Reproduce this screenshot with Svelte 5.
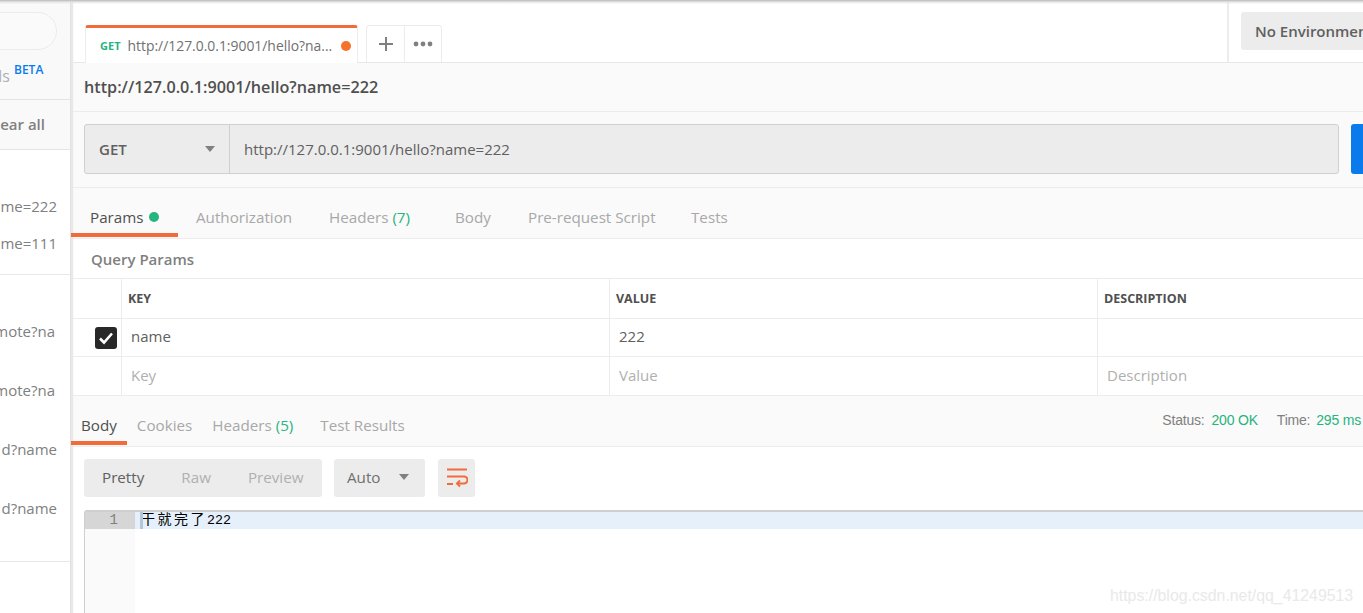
<script>
  const historyGroups = [
    { height: 125, items: [
      { text: 'http://127.0.0.1:9001/hello?name=222', h: 37 },
      { text: 'http://127.0.0.1:9001/hello?name=111', h: 37 }
    ] },
    { height: 287, items: [
      { text: 'http://127.0.0.1:9001/remote?na', h: 59, short: true },
      { text: 'http://127.0.0.1:9001/remote?na', h: 59, short: true },
      { text: 'd?name', h: 59 },
      { text: 'd?name', h: 59 }
    ] }
  ];
  const url = 'http://127.0.0.1:9001/hello?name=222';
</script>

<div class="shell">
  <aside class="sidebar">
    <div class="search-wrap"><div class="search"></div></div>
    <div class="side-tabs"><span class="faded">APIs</span><sup class="beta">BETA</sup></div>
    <div class="clear"><span>Clear all</span></div>
    {#each historyGroups as group}
      <div class="group" style="height: {group.height}px">
        {#each group.items as item}
          <div class="history" class:short={item.short} style="height: {item.h}px"><span>{item.text}</span></div>
        {/each}
      </div>
    {/each}
  </aside>

  <main class="main">
    <div class="tabbar">
      <div class="tabs">
        <div class="tab">
          <span class="tab-method">GET</span>
          <span class="tab-url">http://127.0.0.1:9001/hello?na...</span>
          <span class="dot"></span>
        </div>
        <div class="tab-actions">
          <div class="add">
            <svg width="16" height="16" viewBox="0 0 16 16"><path d="M8 1v14M1 8h14" stroke="#808080" stroke-width="2" fill="none"/></svg>
          </div>
          <div class="more">
            <svg width="20" height="6" viewBox="0 0 20 6" fill="#808080"><circle cx="3" cy="3" r="2.4"/><circle cx="10" cy="3" r="2.4"/><circle cx="17" cy="3" r="2.4"/></svg>
          </div>
        </div>
      </div>
      <div class="env"><div class="env-select">No Environment</div></div>
    </div>

    <div class="title">{url}</div>

    <div class="urlrow">
      <div class="urlbox">
        <div class="method">
          <span>GET</span>
          <i class="caret"></i>
        </div>
        <div class="urlinput">{url}</div>
      </div>
      <div class="send"></div>
    </div>

    <div class="reqtabs">
      <div class="reqtab active params">Params <span class="green-dot"></span></div>
      <div class="reqtab auth">Authorization</div>
      <div class="reqtab hdrs">Headers <em>(7)</em></div>
      <div class="reqtab body">Body</div>
      <div class="reqtab pre">Pre-request Script</div>
      <div class="reqtab">Tests</div>
    </div>

    <div class="query-title">Query Params</div>

    <div class="grid head">
      <div class="c0"></div>
      <div class="c">KEY</div>
      <div class="c">VALUE</div>
      <div class="c">DESCRIPTION</div>
    </div>
    <div class="grid row filled">
      <div class="c0">
        <span class="check">
          <svg width="16" height="14" viewBox="0 0 16 14"><path d="M2 7.5l4 4 8-9" stroke="#fff" stroke-width="2.6" fill="none"/></svg>
        </span>
      </div>
      <div class="c val">name</div>
      <div class="c val">222</div>
      <div class="c val"></div>
    </div>
    <div class="grid row last">
      <div class="c0"></div>
      <div class="c val ph">Key</div>
      <div class="c val ph">Value</div>
      <div class="c val ph">Description</div>
    </div>

    <div class="restabs">
      <div class="restab active">Body</div>
      <div class="restab">Cookies</div>
      <div class="restab">Headers <em>(5)</em></div>
      <div class="restab">Test Results</div>
      <div class="status">
        <span>Status:</span><b>200 OK</b>
        <span class="time">Time:</span><b class="ms">295 ms</b>
      </div>
    </div>

    <div class="toolbar">
      <div class="modes">
        <span class="on">Pretty</span>
        <span>Raw</span>
        <span>Preview</span>
      </div>
      <div class="auto"><span>Auto</span><i class="caret"></i></div>
      <div class="wrap">
        <svg width="22" height="20" viewBox="0 0 22 20" fill="none" stroke="#f26b3a" stroke-width="2">
          <path d="M1 1.500H21"/>
          <path d="M1 8.500H18a3.500 3.500 0 0 1 0 7H11"/>
          <path d="M1 16H7"/>
          <path d="M14 12.500l-3 3 3 3"/>
        </svg>
      </div>
    </div>

    <div class="code">
      <div class="line">
        <div class="lineno">1</div>
        <div class="linetext"><i class="cursor"></i><span class="cjk">干就完了</span>222</div>
      </div>
      <div class="rest"><div class="gutter"></div></div>
    </div>
  </main>

  <div class="watermark">https://blog.csdn.net/qq_41249513</div>
</div>

<style>
  :global(body) {
    margin: 0;
    overflow: hidden;
    background: #fff;
  }

  .shell {
    position: relative;
    display: flex;
    width: 1363px;
    height: 613px;
    overflow: hidden;
    font-family: "Open Sans", "Noto Sans", sans-serif;
    font-size: 14px;
    color: #505050;
  }
  /* shadow strip along the top of the window */
  .shell::before {
    content: "";
    position: absolute;
    left: 0;
    right: 0;
    top: 0;
    height: 4px;
    background: linear-gradient(#b8b8b8, #e2e2e2 45%, transparent);
    z-index: 2;
  }

  /* sidebar */
  .sidebar {
    width: 71px;
    flex: none;
    overflow: hidden;
    box-sizing: border-box;
    border-right: 1px solid #e2e2e2;
    box-shadow: 2px 0 1px #e8e8e8;
    z-index: 1;
    background: #fff;
    color: #808080;
  }
  .search-wrap {
    height: 62px;
    background: #f9f9f9;
    padding: 12px 13px 0 0;
    box-sizing: border-box;
    display: flex;
    justify-content: flex-end;
  }
  .search {
    width: 80px;
    height: 38px;
    flex: none;
    border: 1px solid #ececec;
    border-radius: 19px;
    background: #fafafa;
    box-sizing: border-box;
  }
  .side-tabs {
    height: 37px;
    background: #f9f9f9;
    border-bottom: 1px solid #e4e4e4;
    display: flex;
    justify-content: flex-end;
    padding-right: 60px;
    white-space: nowrap;
    line-height: 28px;
    position: relative;
  }
  .faded {
    color: #b0b0b0;
    font-size: 16px;
  }
  .beta {
    position: absolute;
    left: 14px;
    top: -2px;
    font-size: 12px;
    font-weight: 600;
    line-height: 20px;
    color: #097bed;
  }
  .clear {
    height: 47px;
    padding-bottom: 2px;
    background: #f9f9f9;
    border-bottom: 1px solid #e4e4e4;
    display: flex;
    justify-content: flex-end;
    align-items: center;
    padding-right: 25px;
    white-space: nowrap;
    font-size: 15px;
    font-weight: 600;
    color: #808080;
  }
  .group {
    display: flex;
    flex-direction: column;
    justify-content: flex-end;
    border-bottom: 1px solid #e8e8e8;
    box-sizing: border-box;
    padding-bottom: 4px;
  }
  .history {
    display: flex;
    justify-content: flex-end;
    white-space: nowrap;
    padding-right: 13px;
    font-size: 15px;
  }
  .history.short {
    padding-right: 15px;
  }

  /* main column */
  .main {
    flex: 1;
    min-width: 0;
    display: flex;
    flex-direction: column;
    overflow: hidden;
  }
  .tabbar {
    height: 62px;
    flex: none;
    display: flex;
    justify-content: space-between;
    border-bottom: 1px solid #e8e8e8;
  }
  .tabs {
    display: flex;
    align-items: flex-end;
    padding-left: 14px;
    gap: 8px;
  }
  .tab {
    width: 273px;
    box-sizing: border-box;
    border-top: 3px solid #f26b3a;
    border-left: 1px solid #ececec;
    border-right: 1px solid #ececec;
    border-radius: 3px 3px 0 0;
    display: flex;
    align-items: center;
    padding: 0 6px 0 14px;
    margin-bottom: -1px;
    height: 38px;
    background: #fff;
  }
  .tab-method {
    font-size: 11px;
    font-weight: 700;
    color: #26b47f;
    margin-right: 7px;
  }
  .tab-url {
    font-size: 13.900px;
    color: #707070;
    white-space: nowrap;
    flex: 1;
  }
  .dot {
    width: 10px;
    height: 10px;
    border-radius: 50%;
    background: #f6712a;
    flex: none;
  }
  .tab-actions {
    display: flex;
    height: 37px;
    border: 1px solid #ececec;
    border-bottom: 0;
    border-radius: 3px 3px 0 0;
    box-sizing: border-box;
  }
  .add {
    width: 37px;
    display: flex;
    align-items: center;
    justify-content: center;
    border-right: 1px solid #ececec;
  }
  .more {
    width: 36px;
    display: flex;
    align-items: center;
    justify-content: center;
  }
  .env {
    width: 136px;
    box-sizing: border-box;
    border-left: 2px solid #ececec;
    padding: 12px 0 0 12px;
    overflow: hidden;
    flex: none;
  }
  .env-select {
    width: 180px;
    height: 38px;
    background: #ececec;
    border-radius: 3px;
    padding-left: 14px;
    line-height: 38px;
    font-weight: 600;
    font-size: 15px;
    color: #606060;
    white-space: nowrap;
    box-sizing: border-box;
  }

  .title {
    height: 48px;
    flex: none;
    background: #fafafa;
    border-bottom: 1px solid #ececec;
    padding-left: 13px;
    line-height: 48px;
    font-size: 16.200px;
    font-weight: 600;
    color: #505050;
  }
  .urlrow {
    height: 76px;
    flex: none;
    background: #fafafa;
    border-bottom: 1px solid #ececec;
    display: flex;
    padding: 12px 0 0 13px;
    box-sizing: border-box;
    gap: 12px;
  }
  .urlbox {
    width: 1255px;
    height: 50px;
    display: flex;
    background: #ececec;
    border: 1px solid #d0d0d0;
    border-radius: 3px;
    box-sizing: border-box;
    flex: none;
  }
  .method {
    width: 145px;
    flex: none;
    box-sizing: border-box;
    border-right: 1px solid #d0d0d0;
    display: flex;
    align-items: center;
    justify-content: space-between;
    padding: 0 14px;
    font-weight: 600;
    font-size: 15px;
    color: #606060;
  }
  .caret {
    width: 0;
    height: 0;
    border-left: 5px solid transparent;
    border-right: 5px solid transparent;
    border-top: 6px solid #808080;
  }
  .urlinput {
    line-height: 48px;
    padding-left: 14px;
    font-size: 15px;
    color: #606060;
  }
  .send {
    width: 40px;
    height: 50px;
    background: #097bed;
    border-radius: 3px 0 0 3px;
    flex: none;
  }

  .reqtabs {
    height: 50px;
    flex: none;
    display: flex;
    background: #fafafa;
    border-bottom: 1px solid #ececec;
  }
  .reqtab {
    line-height: 58px;
    height: 50px;
    padding: 0 18px;
    color: #a8a8a8;
    font-size: 15.200px;
    white-space: nowrap;
    box-sizing: border-box;
  }
  .reqtab em,
  .restab em {
    font-style: normal;
    color: #26b47f;
  }
  .reqtab.active {
    position: relative;
    z-index: 2;
    color: #505050;
    box-shadow: inset 0 -4px 0 #f26b3a;
    height: 49px;
  }
  .params {
    width: 107px;
    padding-left: 19px;
  }
  .auth {
    width: 133px;
  }
  .hdrs {
    width: 126px;
  }
  .body {
    width: 73px;
  }
  .pre {
    width: 163px;
  }
  .green-dot {
    display: inline-block;
    width: 10px;
    height: 10px;
    margin-left: 2px;
    border-radius: 50%;
    background: #26b47f;
    position: relative;
    top: -1px;
  }

  .query-title {
    height: 40px;
    flex: none;
    line-height: 40px;
    padding-left: 20px;
    font-size: 15px;
    font-weight: 600;
    color: #808080;
    border-bottom: 1px solid #ececec;
    box-sizing: border-box;
  }
  .grid {
    display: grid;
    grid-template-columns: 51px 488px 488px 1fr;
    flex: none;
    border-bottom: 1px solid #ececec;
  }
  .grid.head {
    height: 39px;
  }
  .grid.row {
    height: 37px;
  }
  .grid.last {
    height: 38px;
  }
  .c0 {
    display: flex;
    align-items: center;
    justify-content: flex-end;
    padding-right: 4px;
    box-sizing: border-box;
    border-right: 1px solid #ececec;
  }
  .c {
    padding-left: 6px;
    border-right: 1px solid #ececec;
    line-height: 39px;
    font-size: 12.500px;
    font-weight: 700;
    color: #505050;
    box-sizing: border-box;
  }
  .c:last-child {
    border-right: 0;
  }
  .val {
    padding-left: 9px;
    line-height: 36px;
    font-size: 15px;
    font-weight: 400;
    color: #606060;
  }
  .filled .val {
    line-height: 34px;
  }
  .val.ph {
    color: #b0b0b0;
  }
  .check {
    width: 22px;
    height: 22px;
    border-radius: 3px;
    background: #282828;
    display: flex;
    align-items: center;
    justify-content: center;
  }

  .restabs {
    height: 50px;
    flex: none;
    display: flex;
    background: #fafafa;
    border-bottom: 1px solid #ececec;
    position: relative;
  }
  .restab {
    padding: 0 10px;
    line-height: 59px;
    height: 49px;
    font-size: 15.200px;
    color: #a8a8a8;
    white-space: nowrap;
    box-sizing: border-box;
  }
  .restab:nth-child(4) {
    margin-left: 7px;
  }
  .restab.active {
    position: relative;
    z-index: 2;
    color: #505050;
    box-shadow: inset 0 -4px 0 #f26b3a;
  }
  .status {
    margin-left: auto;
    display: flex;
    align-items: baseline;
    line-height: 49px;
    font-family: "Liberation Sans", Arial, sans-serif;
    font-size: 14px;
    letter-spacing: -0.200px;
    color: #808080;
    white-space: nowrap;
    padding-right: 2px;
  }
  .status b {
    font-weight: 400;
    color: #26b47f;
    margin-left: 7px;
  }
  .status b.ms {
    margin-left: 6px;
  }
  .time {
    margin-left: 19px;
  }

  .toolbar {
    display: flex;
    flex: none;
    gap: 12px;
    padding: 12px 0 0 13px;
    height: 63px;
    box-sizing: border-box;
  }
  .modes {
    width: 238px;
    height: 38px;
    background: #ececec;
    border-radius: 3px;
    display: flex;
    align-items: center;
    gap: 37px;
    padding: 0 0 2px 18px;
    box-sizing: border-box;
    font-size: 15.200px;
    color: #b0b0b0;
  }
  .modes .on {
    color: #606060;
  }
  .auto {
    width: 91px;
    height: 38px;
    background: #ececec;
    border-radius: 3px;
    display: flex;
    align-items: center;
    justify-content: space-between;
    padding: 0 16px 2px 13px;
    box-sizing: border-box;
    font-size: 15.200px;
    color: #707070;
  }
  .wrap {
    width: 37px;
    height: 38px;
    margin-left: 1px;
    background: #ececec;
    border-radius: 3px;
    display: flex;
    align-items: center;
    justify-content: center;
  }

  .code {
    margin-left: 13px;
    flex: 1;
    border-top: 2px solid #cfcfcf;
    border-left: 1px solid #cfcfcf;
    border-top-left-radius: 3px;
    display: flex;
    flex-direction: column;
  }
  .line {
    height: 17px;
    display: flex;
    background: #e6f0fb;
    flex: none;
  }
  .lineno {
    width: 50px;
    flex: none;
    background: #d6d6d6;
    text-align: right;
    padding-right: 17px;
    box-sizing: border-box;
    font-family: "Liberation Mono", monospace;
    font-size: 14px;
    line-height: 17px;
    color: #808080;
  }
  .linetext {
    padding-left: 6px;
    position: relative;
    font-family: "Liberation Mono", "Noto Sans CJK SC", monospace;
    font-size: 13.330px;
    line-height: 17px;
    color: #000;
  }
  .cjk {
    font-size: 14px;
    letter-spacing: 2.500px;
  }
  .cursor {
    position: absolute;
    left: 5px;
    top: 0;
    width: 3px;
    height: 17px;
    background: #b4c6da;
  }
  .rest {
    flex: 1;
  }
  .gutter {
    width: 50px;
    height: 100%;
    background: #fafafa;
  }

  .watermark {
    position: absolute;
    left: 1110px;
    top: 587px;
    font-family: "Liberation Sans", Arial, sans-serif;
    font-size: 15.850px;
    color: #e9e9e9;
    white-space: nowrap;
  }
</style>
